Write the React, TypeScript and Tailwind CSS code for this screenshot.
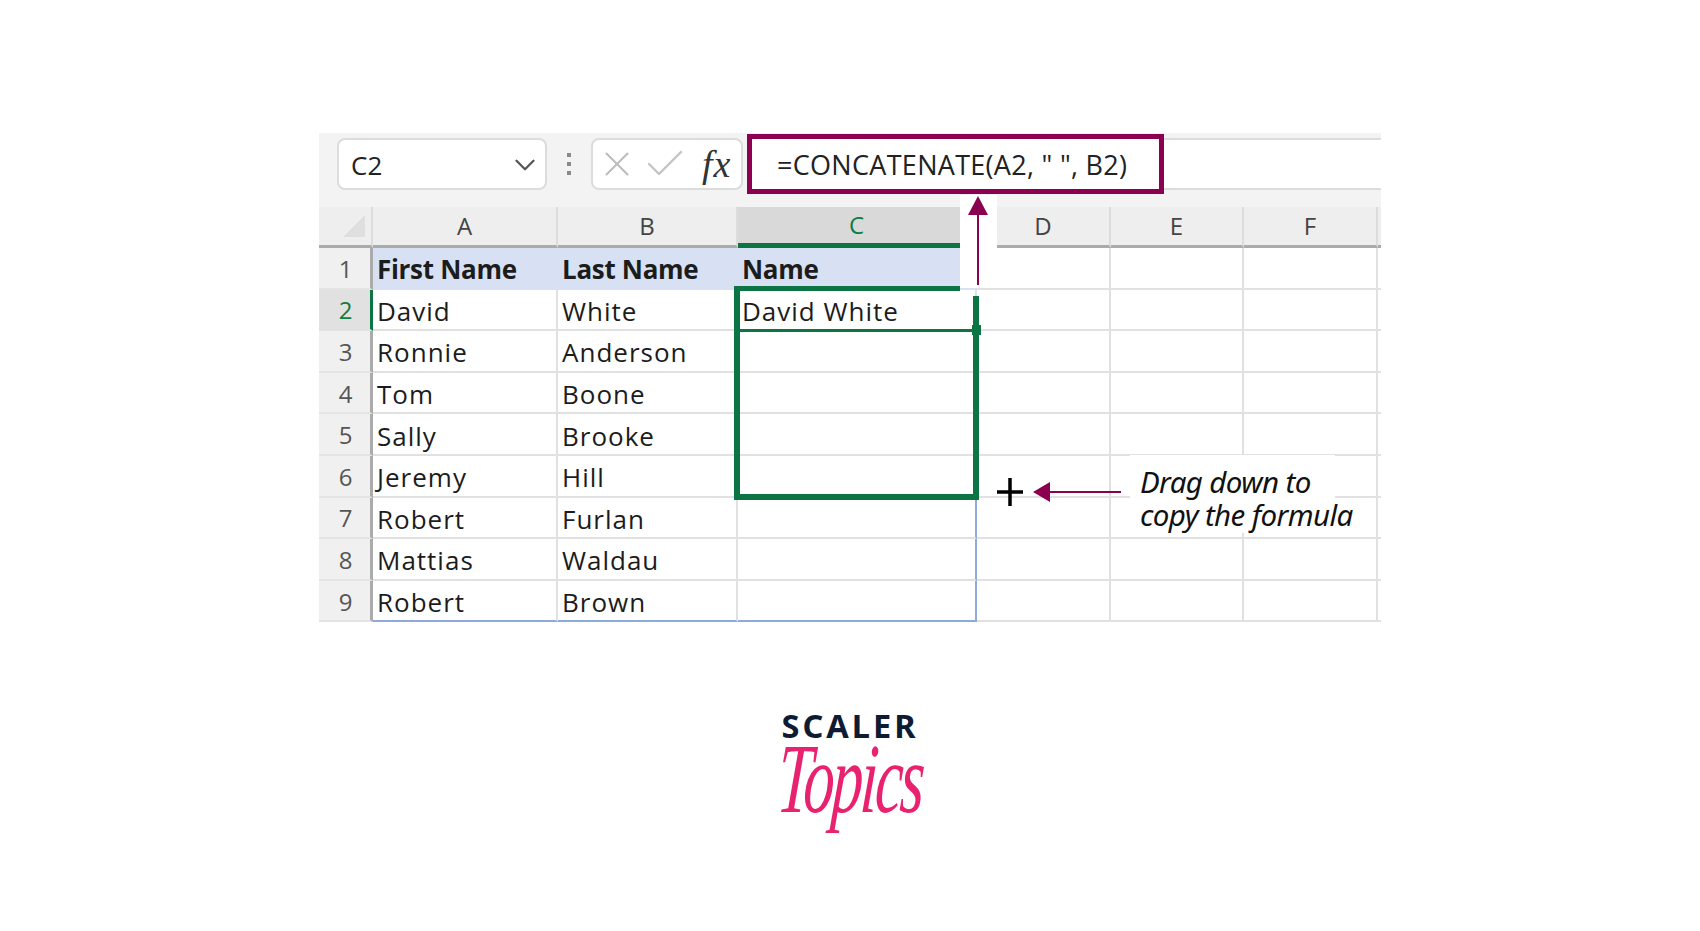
import { X, Check, ChevronDown } from "lucide-react";

const ROWS = [
  ["First Name", "Last Name", "Name"],
  ["David", "White", "David White"],
  ["Ronnie", "Anderson", ""],
  ["Tom", "Boone", ""],
  ["Sally", "Brooke", ""],
  ["Jeremy", "Hill", ""],
  ["Robert", "Furlan", ""],
  ["Mattias", "Waldau", ""],
  ["Robert", "Brown", ""],
];

const COLUMNS = ["A", "B", "C", "D", "E", "F"];

const FONT = "font-['Open_Sans',sans-serif]";

function Cell({ text, rowIndex, col }: { text: string; rowIndex: number; col: number }) {
  const isHeader = rowIndex === 0;
  const isTable = col < 3;
  const last = rowIndex === ROWS.length - 1;
  return (
    <div
      className={`h-[41.6px] pl-[4px] pt-[4px] flex items-center overflow-hidden whitespace-nowrap text-[26px] text-[#1c1c1c] border-r-2 border-b-2 ${
        isHeader && isTable ? "bg-[#d7e1f3] font-bold tracking-[-0.3px] border-[#d7e1f3]" : "tracking-[1px] border-[#e1e1e1]"
      } ${last && isTable ? "border-b-[#8eaadb]" : ""} ${col === 2 && rowIndex > 5 ? "border-r-[#8eaadb]" : ""}`}
    >
      {text}
    </div>
  );
}

export default function App() {
  return (
    <div className={`w-[1700px] h-[931px] bg-white overflow-hidden flex flex-col items-center ${FONT}`}>
      <div className="relative w-[1062px] mt-[133px] ml-[319px] self-start">
        {/* formula bar */}
        <div className="h-[74px] bg-[#f3f3f3] flex items-start pt-[5px] pl-[18px]">
          <div className="w-[210px] h-[52px] bg-white border-2 border-[#dcdcdc] rounded-lg flex items-center justify-between pl-[12px] pr-[3px] pt-[2px] text-[26px] text-[#222]">
            <span>C2</span>
            <ChevronDown size={34} strokeWidth={1.6} className="text-[#555]" />
          </div>
          <div className="w-[44px] h-[52px] flex flex-col items-center justify-center gap-[5px]">
            <span className="w-[4px] h-[4px] bg-[#8a8a8a]" />
            <span className="w-[4px] h-[4px] bg-[#8a8a8a]" />
            <span className="w-[4px] h-[4px] bg-[#8a8a8a]" />
          </div>
          <div className="w-[152px] h-[52px] bg-white border-2 border-[#dcdcdc] rounded-lg flex items-center pl-[3px]">
            <X size={42} strokeWidth={1.2} className="text-[#bdbdbd]" />
            <Check size={48} strokeWidth={1.2} className="text-[#c4c4c4] ml-[3px]" />
            <span className="font-['Liberation_Serif',serif] italic text-[38px] leading-none tracking-[1px] text-[#333] ml-[13px]">fx</span>
          </div>
          <div className="ml-[4px] mt-[-4px] w-[417px] h-[60px] bg-white border-[5px] border-[#8b0050] flex items-center pl-[25px] pt-[2px] text-[27px] tracking-[0.3px] text-[#222] whitespace-nowrap">
            =CONCATENATE(A2, " ", B2)
          </div>
          <div className="flex-1 h-[52px] bg-white border-y-2 border-[#dcdcdc]" />
        </div>

        {/* sheet */}
        <div className="grid grid-cols-[54px_185px_180px_239px_134px_133px_134px_3px]">
          <div className="h-[41px] bg-[#eeeeee] border-r-2 border-b-[3px] border-r-[#dcdcdc] border-b-[#ababab] flex items-end justify-end pr-[6px] pb-[8px]">
            <div className="w-0 h-0 border-l-[22px] border-l-transparent border-b-[22px] border-b-[#dfdfdf]" />
          </div>
          {COLUMNS.map((c) => (
            <div
              key={c}
              className={`h-[41px] flex items-center justify-center text-[24px] border-r-2 ${
                c === "C"
                  ? "bg-[#d9d9d9] text-[#107c41] border-b-[5px] border-b-[#0b7544] border-r-[#d9d9d9]"
                  : "bg-[#eeeeee] text-[#444] border-b-[3px] border-b-[#ababab] border-r-[#dcdcdc]"
              }`}
            >
              {c}
            </div>
          ))}
          <div className="h-[41px] bg-[#eeeeee] border-b-[3px] border-b-[#ababab]" />

          {ROWS.map((row, i) => (
            <div key={i} className="contents">
              <div
                className={`h-[41.6px] flex items-center justify-center pl-[2px] pt-[2px] text-[24px] border-b-2 border-r-[3px] ${
                  i === 1
                    ? "bg-[#e1e1e1] text-[#107c41] border-r-[#0b7544] border-b-[#e1e1e1]"
                    : "bg-[#f0f0f0] text-[#555] border-r-[#ababab] border-b-[#e4e4e4]"
                }`}
              >
                {i + 1}
              </div>
              {row.map((text, col) => (
                <Cell key={col} text={text} rowIndex={i} col={col} />
              ))}
              <Cell text="" rowIndex={i} col={3} />
              <Cell text="" rowIndex={i} col={4} />
              <Cell text="" rowIndex={i} col={5} />
              <div className="h-[41.6px] border-b-2 border-[#e1e1e1]" />
            </div>
          ))}
        </div>

        {/* white strip behind the up arrow */}
        <div className="absolute left-[641px] top-[62px] w-[37px] h-[93px] bg-white" />

        {/* selection */}
        <div className="absolute left-[415px] top-[153px] w-[6px] h-[214px] bg-[#0b7544]" />
        <div className="absolute left-[415px] top-[153px] w-[226px] h-[5px] bg-[#0b7544]" />
        <div className="absolute left-[654px] top-[163px] w-[6px] h-[204px] bg-[#0b7544]" />
        <div className="absolute left-[415px] top-[361px] w-[245px] h-[6px] bg-[#0b7544]" />
        <div className="absolute left-[415px] top-[196px] w-[240px] h-[3px] bg-[#0b7544]" />
        <div className="absolute left-[653px] top-[192px] w-[9px] h-[10px] bg-[#0b7544]" />

        {/* arrow up to formula */}
        <svg className="absolute left-[648px] top-[62px]" width="22" height="92" viewBox="0 0 22 92">
          <path d="M11 1 L21 20 L1 20 Z" fill="#8b0050" />
          <path d="M11 18 V90" stroke="#8b0050" strokeWidth="2" />
        </svg>

        {/* plus and arrow to the handle */}
        <svg className="absolute left-[678px] top-[340px]" width="130" height="36" viewBox="0 0 130 36">
          <path d="M13 5 V33 M0 19 H26" stroke="#000" strokeWidth="3.5" />
          <path d="M36 19 L53 9 L53 29 Z" fill="#8b0050" />
          <path d="M52 19 H124" stroke="#8b0050" strokeWidth="2" />
        </svg>

        {/* note */}
        <div className="absolute left-[811px] top-[322px] w-[205px] h-[78px] bg-white pl-[10px] pt-[10px] text-[29.5px] leading-[33px] italic text-[#111] font-['Noto_Sans',sans-serif] tracking-[-0.6px] whitespace-nowrap">
          Drag down to
          <br />
          copy the formula
        </div>
      </div>

      {/* logo */}
      <div className="mt-[90px] w-[146px] flex flex-col items-center">
        <span className="font-['Noto_Sans',sans-serif] font-bold text-[32.5px] leading-[28px] tracking-[3px] text-[#0d1b33]">SCALER</span>
        <span className="font-['Liberation_Serif',serif] italic text-[62px] leading-[60px] tracking-[-2.5px] text-[#e8226f] mt-[8px] scale-y-[1.6] -skew-x-6">Topics</span>
      </div>
    </div>
  );
}
